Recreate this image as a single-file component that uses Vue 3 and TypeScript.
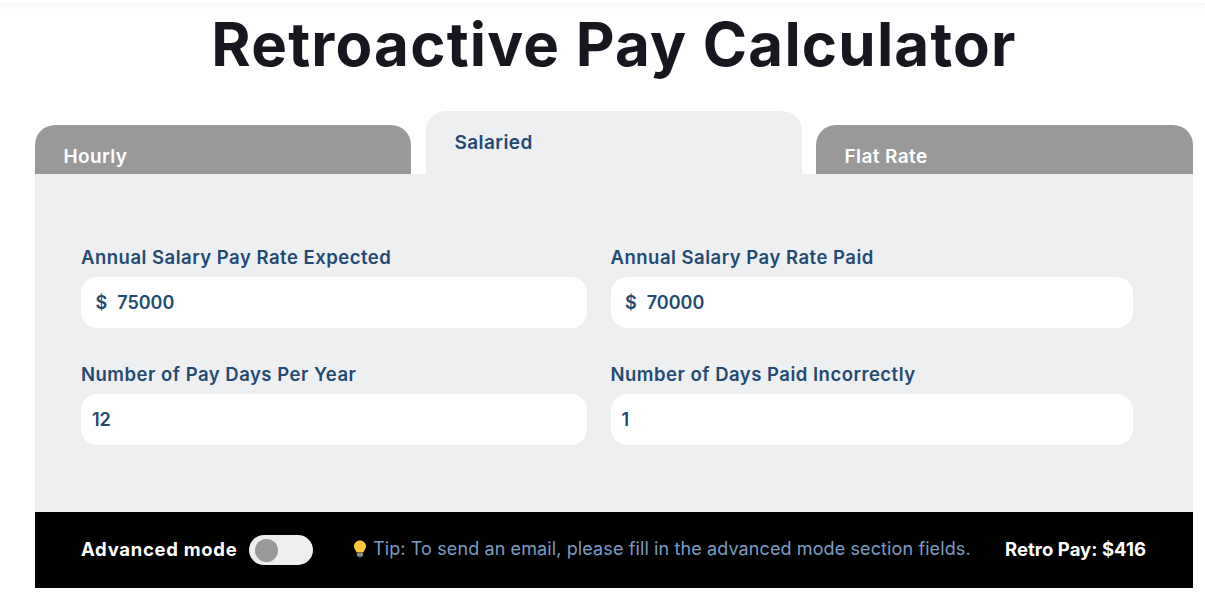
<script setup lang="ts">
interface Field { label: string; value: string; prefix?: string }
const tabs = [
  { name: 'Hourly', active: false },
  { name: 'Salaried', active: true },
  { name: 'Flat Rate', active: false },
]
const fields: Field[] = [
  { label: 'Annual Salary Pay Rate Expected', value: '75000', prefix: '$' },
  { label: 'Annual Salary Pay Rate Paid', value: '70000', prefix: '$' },
  { label: 'Number of Pay Days Per Year', value: '12' },
  { label: 'Number of Days Paid Incorrectly', value: '1' },
]
</script>

<template>
  <div class="page">
    <div class="topband"></div>
    <h1 class="title">Retroactive Pay Calculator</h1>
    <div class="calc">
      <div class="tabs">
        <div v-for="t in tabs" :key="t.name" class="tab" :class="{ active: t.active }">{{ t.name }}</div>
      </div>
      <div class="panel">
        <div v-for="f in fields" :key="f.label" class="field">
          <div class="label">{{ f.label }}</div>
          <div class="input" :class="{ prefixed: f.prefix }">
            <span v-if="f.prefix" class="prefix">{{ f.prefix }}</span>
            <span>{{ f.value }}</span>
          </div>
        </div>
      </div>
      <div class="footer">
        <span class="adv">Advanced mode</span>
        <span class="toggle"><span class="knob"></span></span>
        <svg class="bulb" viewBox="0 0 14 18" width="14" height="18">
          <path d="M7 .6C3.6.6 1 3.2 1 6.3c0 2.6 1.9 3.900 2.600 6.300h6.800C11.100 10.200 13 8.900 13 6.300 13 3.200 10.400.6 7 .6z" fill="#fdc83a" />
          <rect x="4" y="13" width="6" height="3.400" rx="1" fill="#8a8f98" />
          <rect x="5.200" y="16.200" width="3.600" height="1.400" rx=".7" fill="#666b73" />
        </svg>
        <span class="tip">Tip: To send an email, please fill in the advanced mode section fields.</span>
        <span class="retro">Retro Pay: $416</span>
      </div>
    </div>
  </div>
</template>

<style scoped>
.page {
  position: relative;
  width: 1205px;
  height: 600px;
  background: #fff;
  overflow: hidden;
  font-family: Inter, "Noto Sans", sans-serif;
}
.topband {
  position: absolute;
  left: 0;
  right: 0;
  top: 3px;
  height: 11px;
  background: #fcfcfc;
  border-top: 1px dotted #f0f0f0;
}
.title {
  position: relative;
  margin: 0;
  height: 111px;
  padding-top: 8px;
  box-sizing: border-box;
  width: 1228px;
  text-align: center;
  font-size: 60px;
  line-height: 72px;
  font-weight: 650;
  letter-spacing: 1.2px;
  color: #171720;
}
.calc {
  margin-left: 35px;
  width: 1158px;
}
.tabs {
  display: flex;
  align-items: flex-end;
  gap: 15px;
  height: 63px;
}
.tab {
  flex: 0 0 376px;
  height: 49px;
  box-sizing: border-box;
  padding: 20px 0 0 28.500px;
  border-radius: 20px 20px 0 0;
  background: #999999;
  color: #fff;
  font-size: 19px;
  line-height: 24px;
  font-weight: 600;
  letter-spacing: .4px;
}
.tab:last-child {
  flex-basis: 377px;
  margin-left: -1px;
}
.tab.active {
  height: 63px;
  background: #eeeff1;
  color: #234a72;
  padding-top: 20px;
}
.panel {
  display: grid;
  grid-template-columns: 505.500px 522.500px;
  column-gap: 24px;
  row-gap: 33px;
  align-content: start;
  height: 338px;
  box-sizing: border-box;
  padding: 70px 60px 0 46px;
  background: #eeeff1;
}
.label {
  height: 26px;
  margin-bottom: 7px;
  font-size: 18.500px;
  line-height: 26px;
  font-weight: 600;
  letter-spacing: .5px;
  color: #234a72;
}
.input {
  display: flex;
  align-items: center;
  gap: 10px;
  height: 51px;
  padding-left: 11px;
  border-radius: 16px;
  background: #fff;
  font-size: 18px;
  font-weight: 600;
  color: #234a72;
}
.input.prefixed {
  padding-left: 14.500px;
}
.footer {
  display: flex;
  align-items: center;
  height: 76px;
  padding-left: 46px;
  background: #000;
}
.adv {
  width: 168px;
  padding-bottom: 3px;
  font-size: 18.500px;
  font-weight: 700;
  letter-spacing: .7px;
  color: #fff;
}
.toggle {
  display: flex;
  align-items: center;
  width: 64px;
  height: 30px;
  padding-left: 6px;
  box-sizing: border-box;
  border-radius: 15px;
  background: #eeeeee;
}
.knob {
  width: 23px;
  height: 23px;
  border-radius: 50%;
  background: #999999;
}
.bulb {
  margin-left: 40px;
  margin-right: 6px;
  margin-bottom: 3px;
}
.tip {
  width: 632px;
  padding-bottom: 3px;
  font-size: 18px;
  font-weight: 400;
  letter-spacing: .11px;
  color: #7b9cc4;
  white-space: nowrap;
}
.retro {
  padding-bottom: 3px;
  font-size: 18.500px;
  font-weight: 700;
  letter-spacing: .05px;
  color: #fff;
  white-space: nowrap;
}
</style>
